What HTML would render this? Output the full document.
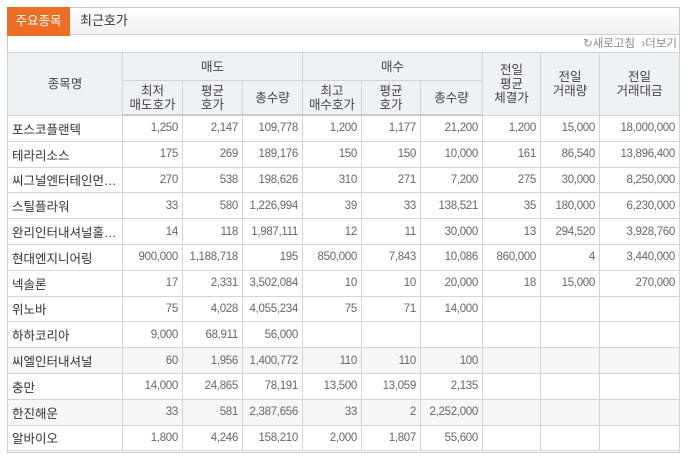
<!DOCTYPE html>
<html><head><meta charset="utf-8"><style>
body{margin:0;background:#fff;font-family:"Liberation Sans","Noto Sans CJK KR",sans-serif;font-size:12px;color:#333}
.box{position:absolute;left:7px;top:7px;width:671px;height:445px;border:1px solid #c9c9c9;border-top:none}
.tabs{position:absolute;left:7px;top:7px;width:672px;height:28px;background:linear-gradient(#fff,#f1f1f1);border-top:1px solid #c9c9c9;border-bottom:1px solid #cfcfcf;box-sizing:border-box}
.t1{position:absolute;left:0;top:-1px;width:63px;height:29px;background:#ee6d25;color:#fff;line-height:28px;text-align:center;font-size:12.5px}
.t2{position:absolute;left:73px;top:0;line-height:26px;font-size:13px;color:#333}
.tool{position:absolute;right:10px;top:36px;line-height:16px;color:#888;font-size:11.5px}
table{position:absolute;left:7px;top:52px;width:672px;border-collapse:collapse;table-layout:fixed}
td,th{border:1px solid #d4d4d4;padding:0 4px;height:24.8px;white-space:nowrap;overflow:hidden}
th{background:#eef1f5;font-weight:normal;color:#444;line-height:14px;font-size:12.5px}
td{text-align:right;color:#666;font-size:11.5px;letter-spacing:-0.3px}
td:first-child{text-align:left;color:#333;font-size:12.5px;letter-spacing:0}
thead tr:last-child th{border-bottom:2px solid #ccc}
.g td{background:#f7f7f7}
</style></head><body>
<div class="box"></div>
<div class="tabs"><div class="t1">주요종목</div><div class="t2">최근호가</div></div>
<div class="tool">↻새로고침 &nbsp;›더보기</div>
<table>
<colgroup><col style="width:115px"><col style="width:60px"><col style="width:60px"><col style="width:60px"><col style="width:59px"><col style="width:59px"><col style="width:62px"><col style="width:58px"><col style="width:59px"><col style="width:80px"></colgroup>
<thead>
<tr><th rowspan="2">종목명</th><th colspan="3" style="height:27px">매도</th><th colspan="3">매수</th><th rowspan="2">전일<br>평균<br>체결가</th><th rowspan="2">전일<br>거래량</th><th rowspan="2">전일<br>거래대금</th></tr>
<tr><th style="height:33px">최저<br>매도호가</th><th>평균<br>호가</th><th>총수량</th><th>최고<br>매수호가</th><th>평균<br>호가</th><th>총수량</th></tr>
</thead>
<tbody>
<tr><td>포스코플랜텍</td><td>1,250</td><td>2,147</td><td>109,778</td><td>1,200</td><td>1,177</td><td>21,200</td><td>1,200</td><td>15,000</td><td>18,000,000</td></tr>
<tr><td>테라리소스</td><td>175</td><td>269</td><td>189,176</td><td>150</td><td>150</td><td>10,000</td><td>161</td><td>86,540</td><td>13,896,400</td></tr>
<tr><td>씨그널엔터테인먼…</td><td>270</td><td>538</td><td>198,626</td><td>310</td><td>271</td><td>7,200</td><td>275</td><td>30,000</td><td>8,250,000</td></tr>
<tr><td>스틸플라워</td><td>33</td><td>580</td><td>1,226,994</td><td>39</td><td>33</td><td>138,521</td><td>35</td><td>180,000</td><td>6,230,000</td></tr>
<tr><td>완리인터내셔널홀…</td><td>14</td><td>118</td><td>1,987,111</td><td>12</td><td>11</td><td>30,000</td><td>13</td><td>294,520</td><td>3,928,760</td></tr>
<tr><td>현대엔지니어링</td><td>900,000</td><td>1,188,718</td><td>195</td><td>850,000</td><td>7,843</td><td>10,086</td><td>860,000</td><td>4</td><td>3,440,000</td></tr>
<tr><td>넥솔론</td><td>17</td><td>2,331</td><td>3,502,084</td><td>10</td><td>10</td><td>20,000</td><td>18</td><td>15,000</td><td>270,000</td></tr>
<tr><td>위노바</td><td>75</td><td>4,028</td><td>4,055,234</td><td>75</td><td>71</td><td>14,000</td><td></td><td></td><td></td></tr>
<tr><td>하하코리아</td><td>9,000</td><td>68,911</td><td>56,000</td><td></td><td></td><td></td><td></td><td></td><td></td></tr>
<tr class="g"><td>씨엘인터내셔널</td><td>60</td><td>1,956</td><td>1,400,772</td><td>110</td><td>110</td><td>100</td><td></td><td></td><td></td></tr>
<tr><td>충만</td><td>14,000</td><td>24,865</td><td>78,191</td><td>13,500</td><td>13,059</td><td>2,135</td><td></td><td></td><td></td></tr>
<tr class="g"><td>한진해운</td><td>33</td><td>581</td><td>2,387,656</td><td>33</td><td>2</td><td>2,252,000</td><td></td><td></td><td></td></tr>
<tr><td>알바이오</td><td>1,800</td><td>4,246</td><td>158,210</td><td>2,000</td><td>1,807</td><td>55,600</td><td></td><td></td><td></td></tr>
</tbody></table>
</body></html>
